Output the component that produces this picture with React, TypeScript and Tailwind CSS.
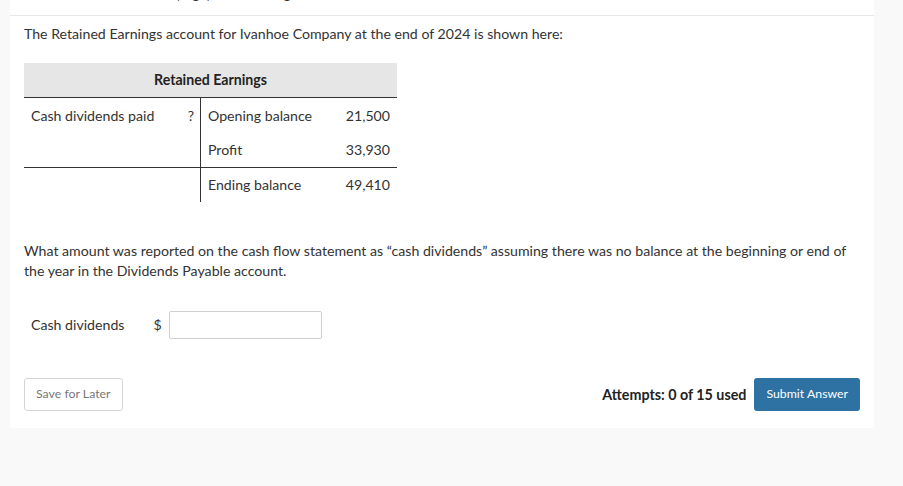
import React from 'react';

const rows = [
  { label: 'Opening balance', amount: '21,500' },
  { label: 'Profit', amount: '33,930' },
];

/** T-account for Retained Earnings with one unknown on the debit side. */
function TAccount() {
  return (
    <div className="w-[373px] text-[14.15px] text-[#333]">
      <div className="flex h-[35px] items-center justify-center border-b border-[#333] bg-[#e6e6e6] font-bold text-[#222]">
        Retained Earnings
      </div>
      <div className="flex">
        <div className="flex h-[35px] w-[176px] items-center justify-between pl-[7px] pr-[6px]">
          <span>Cash dividends paid</span>
          <span>?</span>
        </div>
        <div className="flex h-[35px] flex-1 items-center justify-between border-l border-[#333] pl-[7px] pr-[7px]">
          <span>{rows[0].label}</span>
          <span>{rows[0].amount}</span>
        </div>
      </div>
      <div className="flex">
        <div className="h-[34px] w-[176px]" />
        <div className="flex h-[34px] flex-1 items-center justify-between border-l border-[#333] pl-[7px] pr-[7px]">
          <span>{rows[1].label}</span>
          <span>{rows[1].amount}</span>
        </div>
      </div>
      <div className="flex border-t border-[#333]">
        <div className="h-[34px] w-[176px]" />
        <div className="flex h-[34px] flex-1 items-center justify-between border-l border-[#333] pl-[7px] pr-[7px]">
          <span>Ending balance</span>
          <span>49,410</span>
        </div>
      </div>
    </div>
  );
}

export default function App() {
  return (
    <div className="h-[486px] w-full bg-[#f9f9f9] font-['Lato','Noto_Sans',sans-serif] text-[#333]">
      <div className="ml-[10px] w-[864px] bg-white">
        {/* tail of the previous line, scrolled mostly out of view */}
        <div className="h-[16px] overflow-hidden border-b border-[#e8e8e8]">
          <div className="mt-[-16px] whitespace-nowrap pl-[14px] text-[14px] leading-[20px] text-[#333]">
            Brief Exercise 13-04 a-b (Algo) Determining dividends
          </div>
        </div>

        <div className="px-[14px] pb-[17px] pt-[8px]">
          <p className="text-[14.15px] leading-[20px]">
            The Retained Earnings account for Ivanhoe Company at the end of 2024 is shown here:
          </p>

          <div className="mt-[19px]">
            <TAccount />
          </div>

          <p className="mt-[39px] w-[832px] text-[14.15px] leading-[20px]">
            What amount was reported on the cash flow statement as “cash dividends” assuming there was
            no balance at the beginning or end of the year in the Dividends Payable account.
          </p>

          <div className="mt-[30px] flex items-center text-[14.15px]">
            <span className="pl-[7px]">Cash dividends</span>
            <span className="ml-[29px]">$</span>
            <input
              type="text"
              className="ml-[7px] h-[28px] w-[153px] rounded-[2px] border border-[#cfcfcf] px-2 outline-none"
            />
          </div>

          <div className="mt-[39px] flex items-center justify-between">
            <button className="h-[33px] rounded-[3px] border border-[#d5d5d5] bg-white px-[11px] text-[12.3px] text-[#777]">
              Save for Later
            </button>
            <div className="flex items-center gap-[8px]">
              <span className="text-[14.3px] font-bold text-[#222]">Attempts: 0 of 15 used</span>
              <button className="h-[33px] rounded-[3px] bg-[#2e72a4] px-[12px] text-[12.3px] text-white">
                Submit Answer
              </button>
            </div>
          </div>
        </div>
      </div>
    </div>
  );
}
